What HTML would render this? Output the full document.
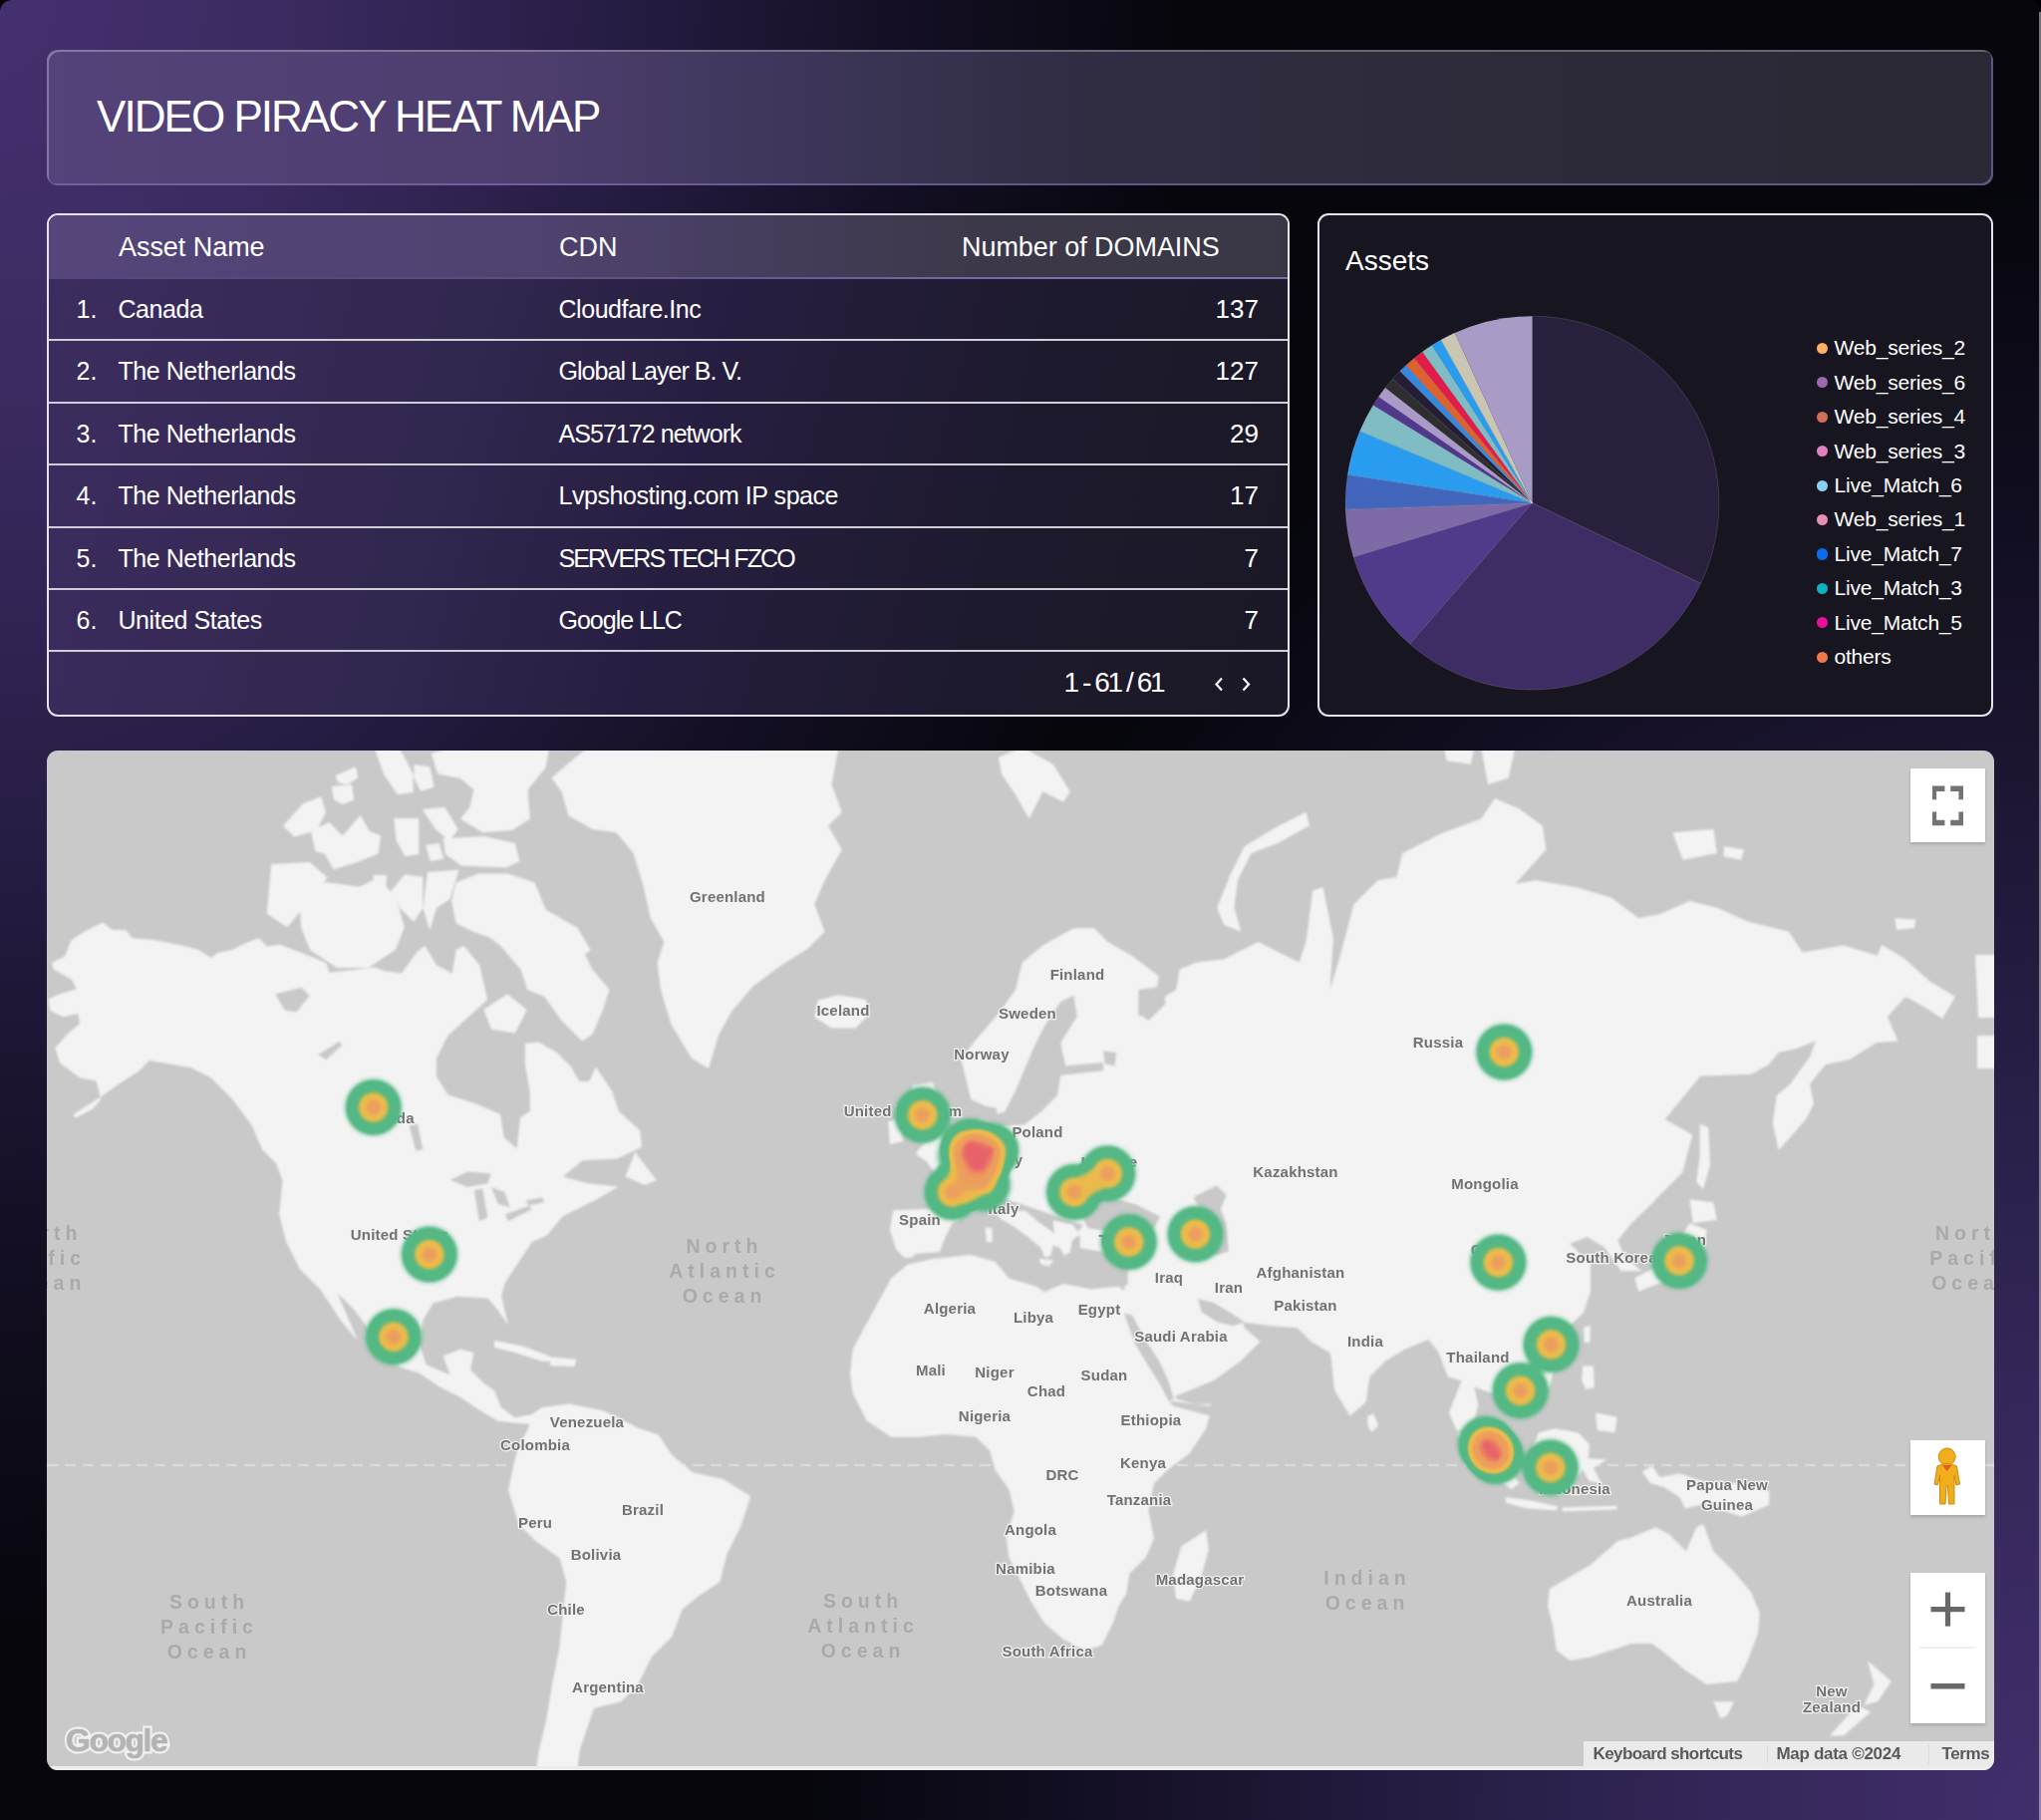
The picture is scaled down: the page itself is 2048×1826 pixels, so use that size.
<!DOCTYPE html>
<html><head><meta charset="utf-8">
<style>
*{margin:0;padding:0;box-sizing:border-box}
html,body{width:2048px;height:1826px;overflow:hidden;background:#000}
body{font-family:"Liberation Sans",sans-serif;color:#fff;position:relative}
#frame{position:absolute;left:0;top:0;width:2048px;height:1826px;border-radius:12px 12px 0 0;
 background:radial-gradient(ellipse 1200px 1650px at 0px 0px,#45306f 0%,#3a2a60 25%,#281d45 50%,#140f24 75%,rgba(6,6,12,0) 100%),radial-gradient(ellipse 1250px 1650px at 2048px 1826px,#412e6c 0%,#35275a 25%,#221a3c 55%,#120e22 78%,rgba(6,6,12,0) 100%),#06060c;overflow:hidden}
.abs{position:absolute}
#title{left:47px;top:50px;width:1953px;height:136px;border-radius:11px;
 background:linear-gradient(to right,#54427a 0%,#4d3e6e 25%,#3a3454 42%,#312d44 52%,#2e2c3c 68%,#2a2834 100%);
 box-shadow:inset 2px 2px 0 rgba(255,255,255,0.28), inset -2px -2px 0 rgba(140,120,190,0.55)}
#title h1{position:absolute;left:97px;top:88px;font-weight:normal;font-size:44px;line-height:56px;letter-spacing:-1.95px;white-space:nowrap}
#table{left:47px;top:214px;width:1247px;height:505px;border:2px solid #e4e2ea;border-radius:11px;overflow:hidden;
 background:linear-gradient(105deg,#3c2d60 0%,#32274f 33%,#261e40 52%,#1e1a2e 75%,#1a1826 100%)}
#thead{left:0;top:0;width:100%;height:64px;background:linear-gradient(to right,#55457b 0%,#4f426f 40%,#3d3849 75%,#393745 100%);border-bottom:2px solid transparent;border-image:linear-gradient(to right,rgba(125,108,174,0) 0%,rgba(125,108,174,0.3) 40%,#7d6cae 80%) 1}
.th{position:absolute;top:15.3px;font-size:27px;line-height:34px;white-space:nowrap;letter-spacing:-0.05px}
.row{position:absolute;left:0;width:100%;height:62.4px;border-bottom:2px solid #cfcdd6}
.row span{position:absolute;top:14px;font-size:25px;line-height:32px;white-space:nowrap;letter-spacing:-0.45px}
.row .n{left:27.5px;letter-spacing:0}
.row .a{left:69.5px}
.row .c{left:511.5px}
.row .d{right:29px;letter-spacing:0;font-size:26px}
#pager{left:1018.5px;top:451.5px;font-size:28px;line-height:34px;letter-spacing:-2.4px;white-space:nowrap}
#pie{left:1322px;top:214px;width:678px;height:505px;border:2px solid #e4e2ea;border-radius:11px;background:#17151f}
#pie .t{position:absolute;left:26px;top:28.5px;font-size:28px;line-height:34px}
.lg{position:absolute;left:516.5px;font-size:21px;line-height:26px;white-space:nowrap;letter-spacing:-0.2px}
.lg i{position:absolute;left:-17.5px;top:7.6px;width:11.2px;height:11.2px;border-radius:50%}
#map{left:47px;top:753px;width:1954px;height:1023px;border-radius:11px;overflow:hidden;background:#c9c9c9}
</style></head><body>
<div id="frame">
 <div style="position:absolute;right:0;top:12px;width:1.7px;height:1814px;background:linear-gradient(#74727e,#7e7a90 50%,#9088a8)"></div>
 <div id="title" class="abs"><h1 style="left:50px;top:39px">VIDEO PIRACY HEAT MAP</h1></div>

 <div id="table" class="abs">
  <div id="thead" class="abs">
   <div class="th" style="left:70px">Asset Name</div>
   <div class="th" style="left:512px">CDN</div>
   <div class="th" style="left:916px">Number of DOMAINS</div>
  </div>
  <div class="row" style="top:64px"><span class="n">1.</span><span class="a">Canada</span><span class="c">Cloudfare.Inc</span><span class="d">137</span></div>
  <div class="row" style="top:126.4px"><span class="n">2.</span><span class="a">The Netherlands</span><span class="c" style="letter-spacing:-0.95px">Global Layer B. V.</span><span class="d">127</span></div>
  <div class="row" style="top:188.8px"><span class="n">3.</span><span class="a">The Netherlands</span><span class="c" style="letter-spacing:-0.95px">AS57172 network</span><span class="d">29</span></div>
  <div class="row" style="top:251.2px"><span class="n">4.</span><span class="a">The Netherlands</span><span class="c">Lvpshosting.com IP space</span><span class="d">17</span></div>
  <div class="row" style="top:313.6px"><span class="n">5.</span><span class="a">The Netherlands</span><span class="c" style="letter-spacing:-1.9px">SERVERS TECH FZCO</span><span class="d">7</span></div>
  <div class="row" style="top:376px"><span class="n">6.</span><span class="a">United States</span><span class="c" style="letter-spacing:-1px">Google LLC</span><span class="d">7</span></div>
  <div id="pager" class="abs">1 - 61 / 61</div>
  <svg class="abs" style="left:1168px;top:461px" width="40" height="20"><path d="M9 3.5L3.5 9.5L9 15.5M30.5 3.5L36 9.5L30.5 15.5" fill="none" stroke="#fff" stroke-width="2.2"/></svg>
 </div>

 <div id="pie" class="abs">
  <div class="t">Assets</div>
  <div class="lg" style="top:120.3px"><i style="background:#fcb068"></i>Web_series_2</div>
  <div class="lg" style="top:154.7px"><i style="background:#a066b0"></i>Web_series_6</div>
  <div class="lg" style="top:189.1px"><i style="background:#d07058"></i>Web_series_4</div>
  <div class="lg" style="top:223.6px"><i style="background:#e080c0"></i>Web_series_3</div>
  <div class="lg" style="top:258.0px"><i style="background:#88d0f4"></i>Live_Match_6</div>
  <div class="lg" style="top:292.4px"><i style="background:#e890b0"></i>Web_series_1</div>
  <div class="lg" style="top:326.8px"><i style="background:#0a6cf0"></i>Live_Match_7</div>
  <div class="lg" style="top:361.3px"><i style="background:#10b0c4"></i>Live_Match_3</div>
  <div class="lg" style="top:395.7px"><i style="background:#e8109c"></i>Live_Match_5</div>
  <div class="lg" style="top:430.1px"><i style="background:#f07848"></i>others</div>
 </div>
 <svg class="abs" style="left:0;top:0" width="2048" height="760"><path d="M1537.5 504.6L1537.50 317.20A187.4 187.4 0 0 1 1706.64 585.28Z" fill="#29203e" stroke="#ffffff" stroke-opacity="0.18" stroke-width="0.7"/>
<path d="M1537.5 504.6L1706.64 585.28A187.4 187.4 0 0 1 1414.55 646.03Z" fill="#3e2c64" stroke="#ffffff" stroke-opacity="0.18" stroke-width="0.7"/>
<path d="M1537.5 504.6L1414.55 646.03A187.4 187.4 0 0 1 1358.10 558.76Z" fill="#503a8a" stroke="#ffffff" stroke-opacity="0.18" stroke-width="0.7"/>
<path d="M1537.5 504.6L1358.10 558.76A187.4 187.4 0 0 1 1350.21 511.14Z" fill="#7d6aa6" stroke="#ffffff" stroke-opacity="0.18" stroke-width="0.7"/>
<path d="M1537.5 504.6L1350.21 511.14A187.4 187.4 0 0 1 1352.26 476.25Z" fill="#4266bc" stroke="#ffffff" stroke-opacity="0.18" stroke-width="0.7"/>
<path d="M1537.5 504.6L1352.26 476.25A187.4 187.4 0 0 1 1364.49 432.58Z" fill="#2a9cf0" stroke="#ffffff" stroke-opacity="0.18" stroke-width="0.7"/>
<path d="M1537.5 504.6L1364.49 432.58A187.4 187.4 0 0 1 1377.89 406.41Z" fill="#80bcc4" stroke="#ffffff" stroke-opacity="0.18" stroke-width="0.7"/>
<path d="M1537.5 504.6L1377.89 406.41A187.4 187.4 0 0 1 1383.43 397.92Z" fill="#50398c" stroke="#ffffff" stroke-opacity="0.18" stroke-width="0.7"/>
<path d="M1537.5 504.6L1383.43 397.92A187.4 187.4 0 0 1 1390.03 388.97Z" fill="#a99ac8" stroke="#ffffff" stroke-opacity="0.18" stroke-width="0.7"/>
<path d="M1537.5 504.6L1390.03 388.97A187.4 187.4 0 0 1 1397.36 380.18Z" fill="#2e2e2e" stroke="#ffffff" stroke-opacity="0.18" stroke-width="0.7"/>
<path d="M1537.5 504.6L1397.36 380.18A187.4 187.4 0 0 1 1404.76 372.32Z" fill="#251d35" stroke="#ffffff" stroke-opacity="0.18" stroke-width="0.7"/>
<path d="M1537.5 504.6L1404.76 372.32A187.4 187.4 0 0 1 1410.89 366.43Z" fill="#3588dc" stroke="#ffffff" stroke-opacity="0.18" stroke-width="0.7"/>
<path d="M1537.5 504.6L1410.89 366.43A187.4 187.4 0 0 1 1419.06 359.38Z" fill="#dc6230" stroke="#ffffff" stroke-opacity="0.18" stroke-width="0.7"/>
<path d="M1537.5 504.6L1419.06 359.38A187.4 187.4 0 0 1 1427.35 352.99Z" fill="#e21c4a" stroke="#ffffff" stroke-opacity="0.18" stroke-width="0.7"/>
<path d="M1537.5 504.6L1427.35 352.99A187.4 187.4 0 0 1 1436.81 346.55Z" fill="#80bcc4" stroke="#ffffff" stroke-opacity="0.18" stroke-width="0.7"/>
<path d="M1537.5 504.6L1436.81 346.55A187.4 187.4 0 0 1 1445.93 341.09Z" fill="#2a9cf0" stroke="#ffffff" stroke-opacity="0.18" stroke-width="0.7"/>
<path d="M1537.5 504.6L1445.93 341.09A187.4 187.4 0 0 1 1459.79 334.07Z" fill="#cac6b4" stroke="#ffffff" stroke-opacity="0.18" stroke-width="0.7"/>
<path d="M1537.5 504.6L1459.79 334.07A187.4 187.4 0 0 1 1537.50 317.20Z" fill="#a89cc6"/></svg>

 <div id="map" class="abs"><svg width="1954" height="1023" viewBox="0 0 1954 1023" style="position:absolute;left:0;top:0"><defs><filter id="bl" x="0" y="0" width="1954" height="1023" filterUnits="userSpaceOnUse"><feGaussianBlur stdDeviation="1.2"/></filter></defs><line x1="0" y1="717" x2="1954" y2="717" stroke="#dadada" stroke-width="2.5" stroke-dasharray="11 7"/><g filter="url(#bl)"><g fill="#f3f3f3"><path d="M4.9 212.9L18.1 206.3L24.7 189.9L37.9 181.6L56.0 172.5L65.9 180.0L79.1 180.0L85.7 188.2L107.1 189.9L131.9 194.8L151.6 199.7L164.8 208.0L171.4 203.0L186.3 199.7L199.4 193.2L212.6 188.2L220.9 196.4L234.1 194.8L247.2 199.7L263.7 206.3L280.2 212.9L283.5 222.8L312.8 219.5L328.4 217.5L340.2 221.5L355.9 223.4L371.5 201.9L379.4 196.0L391.1 215.6L406.8 223.4L410.7 199.9L418.6 196.0L434.3 215.6L442.1 250.1L402.4 285.9L390.9 309.0L390.9 327.1L402.4 345.2L432.1 355.1L455.2 365.0L458.5 388.1L471.7 399.6L475.0 368.3L484.9 361.7L484.9 343.6L479.9 315.6L479.9 294.1L493.1 292.5L511.2 302.4L526.1 317.2L534.3 332.0L544.2 332.0L550.8 317.2L567.3 341.9L573.9 361.7L595.3 381.5L596.9 398.0L572.2 409.5L537.6 411.2L517.8 427.6L542.6 434.2L573.9 437.5L550.8 450.7L517.8 467.2L501.3 487.0L501.1 487.0L487.0 492.8L473.3 513.4L459.6 533.9L456.2 547.7L463.0 576.8L452.7 561.4L442.4 549.4L411.6 547.7L387.6 554.5L377.3 571.7L373.8 595.7L380.7 616.3L404.7 626.5L397.6 607.6L414.7 600.7L428.5 604.1L425.0 621.3L438.7 635.0L449.0 641.9L455.9 659.0L469.6 669.3L486.8 665.9L490.2 676.2L469.6 674.5L452.5 672.7L435.3 662.5L414.7 648.7L394.2 638.4L373.6 624.7L353.0 617.9L329.3 588.8L308.7 561.4L291.5 544.2L301.8 568.2L312.1 592.2L295.0 571.7L274.4 540.8L253.8 520.2L240.1 492.8L233.2 465.3L236.6 431.0L229.8 413.9L216.1 400.2L205.8 376.2L185.2 348.7L164.6 328.2L144.0 317.9L102.9 311.0L92.3 321.7L74.2 333.3L54.4 347.3L36.3 358.8L26.4 365.4L28.8 368.7L46.2 359.6L54.4 349.7L49.4 331.6L33.0 328.3L13.2 313.5L8.2 298.6L21.4 283.8L33.0 273.9L31.3 264.0L16.5 267.3L3.3 260.7L1.6 249.2L13.2 244.2L29.7 239.3L24.7 229.4L6.6 219.5Z"/><path d="M486.8 665.9L497.0 659.0L524.5 655.6L558.8 662.5L593.1 679.6L613.7 686.5L627.4 707.0L648.0 724.2L678.8 731.0L706.3 748.2L696.0 779.1L682.3 806.5L675.4 833.9L654.8 847.7L637.7 861.4L627.4 888.8L606.8 909.4L593.1 937.2L576.2 954.2L548.8 961.1L541.9 981.7L535.0 1002.3L531.6 1026.3L490.4 1026.3L493.9 1002.3L500.7 974.8L507.6 933.7L514.5 899.4L517.9 865.1L521.3 834.2L514.5 810.2L490.4 793.0L473.3 775.9L463.0 741.6L469.9 710.7L473.0 700.2L483.3 679.6Z"/><path d="M506.3 27.4L530.3 6.9L544.0 -3.4L794.4 -3.4L787.5 34.3L797.8 61.7L784.1 75.5L797.8 99.5L780.6 130.3L770.3 154.3L780.6 181.8L763.5 198.9L736.1 216.1L708.6 236.6L688.0 260.7L674.3 284.7L664.0 319.0L646.9 308.7L626.3 274.4L616.0 240.1L612.6 212.6L619.4 192.1L605.7 168.1L598.9 137.2L588.6 102.9L571.4 82.3L547.4 78.9L523.4 65.2L516.5 41.2Z"/><path d="M773.8 250.4L794.4 245.2L821.8 249.7L825.9 264.1L811.5 278.5L787.5 278.5L770.3 267.5Z"/><path d="M423.9 130.3L444.5 130.3L468.5 137.2L489.1 150.9L506.3 164.6L526.8 178.3L537.1 198.9L547.4 219.5L564.6 240.1L557.7 260.7L547.4 284.7L537.1 291.5L516.5 270.9L499.4 246.9L482.3 240.1L475.4 219.5L454.8 195.5L441.1 185.2L430.8 164.6L423.9 147.5Z"/><path d="M438.3 259.9L462.0 244.2L481.7 259.9L469.9 283.6L446.2 279.7Z"/><path d="M590.3 402.9L611.8 430.9L600.2 435.9L580.5 427.6Z"/><path d="M449.0 592.1L476.5 597.3L500.5 605.9L514.2 612.7L497.0 612.7L469.6 604.1L449.0 599.0Z"/><path d="M503.9 608.3L531.3 611.0L529.6 617.9L505.6 617.2Z"/><path d="M927.4 350.2L917.1 308.7L934.2 288.1L954.8 264.1L972.0 240.1L978.8 212.6L999.4 195.5L1030.3 178.3L1050.8 178.3L1064.6 192.1L1088.6 205.8L1116.0 226.4L1112.6 243.5L1095.4 253.8L1095.4 267.5L1116.0 250.4L1133.2 240.1L1136.6 219.5L1153.7 212.6L1181.2 209.2L1215.5 192.1L1236.1 202.4L1256.6 212.6L1263.5 192.1L1270.3 140.6L1280.6 137.2L1290.9 188.6L1287.5 240.1L1297.8 205.8L1311.5 154.3L1335.5 130.3L1354.4 126.9L1360.3 102.9L1401.5 82.3L1439.2 68.6L1452.9 48.0L1476.9 58.3L1500.9 75.5L1504.4 99.5L1473.5 133.8L1494.1 130.3L1535.2 137.2L1569.5 147.5L1597.0 168.1L1617.5 164.6L1648.4 150.9L1675.9 157.8L1706.7 171.5L1747.9 181.8L1761.6 202.4L1802.8 195.5L1837.1 205.8L1841.0 195.0L1863.0 208.0L1890.0 232.0L1915.0 247.0L1902.0 269.0L1882.0 256.0L1865.0 247.0L1847.0 267.0L1857.5 291.5L1836.0 293.0L1809.0 310.0L1785.0 315.0L1769.1 334.5L1773.0 354.2L1765.2 369.9L1737.7 401.3L1731.8 373.8L1735.7 346.3L1749.5 334.5L1769.1 307.0L1775.0 291.3L1755.4 299.2L1737.7 303.1L1727.9 314.9L1710.2 324.7L1659.1 326.7L1623.7 369.9L1651.2 385.6L1641.4 422.9L1611.9 452.4L1453.0 397.0L1153.0 367.0L1003.0 367.0L943.0 357.0Z"/><path d="M1612.7 452.6L1590.1 474.2L1576.4 491.3L1583.3 508.5L1600.4 522.2L1579.8 522.2L1562.7 498.2L1545.5 487.9L1528.4 494.8L1549.0 515.3L1549.0 542.8L1542.1 563.4L1528.4 577.1L1514.7 611.4L1507.8 638.8L1476.9 645.7L1452.9 645.7L1432.3 638.8L1436.3 656.8L1432.4 672.4L1426.5 684.2L1414.8 682.2L1406.9 664.6L1419.5 632.2L1405.8 628.3L1396.0 602.8L1386.2 591.0L1362.7 600.8L1343.1 612.6L1327.4 628.3L1323.5 653.7L1307.8 667.5L1292.1 642.0L1288.2 604.7L1268.6 593.0L1254.9 579.3L1229.4 577.3L1200.0 573.4L1201.9 579.3L1217.6 593.0L1198.0 612.6L1170.6 632.2L1127.5 649.8L1111.8 622.4L1096.1 593.0L1082.4 567.5L1078.5 561.6L1084.8 514.6L1083.9 506.8L1058.4 502.8L1036.8 498.9L1034.9 483.2L1044.7 467.6L1042.7 455.8L1073.0 347.0L1353.0 327.0L1603.0 397.0Z"/><path d="M934.9 336.0L944.8 345.9L959.6 362.4L954.6 365.7L951.3 375.6L931.6 378.9L918.4 383.8L908.5 395.3L892.0 400.3L872.2 405.2L882.1 411.8L892.0 425.0L888.7 451.4L895.3 459.6L849.2 461.3L845.9 481.1L852.4 500.8L860.7 509.1L880.5 507.4L895.3 504.1L901.9 487.6L908.5 474.5L921.7 466.2L934.9 461.3L948.0 459.6L967.8 444.8L1000.8 428.3L1033.8 395.3L1017.3 329.4L967.8 329.4Z"/><path d="M289.7 25.2L310.0 16.2L312.3 27.5L301.0 34.3L292.0 32.0Z"/><path d="M285.8 36.1L306.1 33.9L308.3 49.6L297.1 54.1L288.1 49.6Z"/><path d="M329.3 -0.7L351.9 -5.2L360.9 10.5L367.6 24.1L367.6 42.1L351.9 44.3L338.3 24.1Z"/><path d="M368.5 14.0L384.2 16.2L388.8 36.5L375.2 41.0L368.5 27.5Z"/><path d="M385.6 3.3L419.4 -7.9L505.1 -7.9L500.6 16.9L482.6 39.4L484.8 68.7L466.8 80.0L437.5 82.2L414.9 68.7L424.0 57.4L428.5 39.4L414.9 28.1L392.4 23.6Z"/><path d="M237.1 75.6L257.3 53.0L275.4 46.3L279.9 62.0L270.9 80.1L248.3 86.8Z"/><path d="M265.1 80.9L283.1 71.9L296.7 85.4L314.7 65.1L323.7 80.9L335.0 85.4L332.7 103.4L310.2 112.4L287.7 119.2L278.6 103.4L269.6 101.2Z"/><path d="M348.3 68.0L373.1 68.0L373.1 104.1L359.6 106.3L350.6 90.6Z"/><path d="M380.2 95.1L393.7 92.9L398.2 108.7L384.7 110.9Z"/><path d="M397.8 88.3L438.4 86.1L469.9 92.9L474.4 110.9L460.9 117.6L415.9 115.4L400.1 104.1Z"/><path d="M376.8 58.9L399.3 56.7L412.9 79.2L403.8 90.5L390.3 79.2Z"/><path d="M225.3 114.1L263.7 111.9L281.7 127.6L263.7 150.2L241.1 177.2L220.8 163.7Z"/><path d="M252.8 136.8L282.1 132.3L313.7 136.8L331.7 127.8L349.7 145.8L358.8 177.3L349.7 199.9L322.7 217.9L291.1 217.9L264.1 199.9L255.1 177.3Z"/><path d="M327.5 125.1L341.1 125.1L338.8 158.9L329.8 161.2Z"/><path d="M345.7 140.3L359.2 124.5L377.2 126.8L377.2 158.3L368.2 171.8L354.7 158.3Z"/><path d="M382.0 122.0L413.5 119.8L404.5 149.1L391.0 158.1L384.2 180.6L377.5 158.1Z"/><path d="M410.6 132.6L433.2 123.6L462.5 123.6L489.5 132.6L500.8 159.7L532.3 177.7L545.9 200.2L532.3 209.2L509.8 200.2L482.8 191.2L455.7 191.2L428.7 182.2L410.6 173.2L406.1 150.6Z"/><path d="M953.0 347.0L1203.0 347.0L1203.0 477.0L1043.0 477.0L953.0 447.0Z"/></g><g fill="#c9c9c9"><path d="M1017.3 251.9L1030.5 245.4L1033.8 266.8L1017.3 293.2L1022.2 316.2L1060.1 312.9L1060.1 321.2L1017.3 326.1L1014.0 345.9L997.5 362.4L981.0 375.6L954.6 377.2L948.0 365.7L961.2 362.4L972.8 339.3L990.9 296.4L1000.8 276.7Z"/><path d="M1042.7 455.8L1068.2 448.0L1093.7 455.8L1117.2 467.6L1111.3 479.3L1087.8 479.3L1068.2 483.2L1044.7 479.3L1038.8 467.6Z"/><path d="M1150.5 448.0L1174.0 436.2L1183.8 446.0L1177.9 459.7L1183.8 475.4L1185.8 502.8L1172.0 506.8L1162.3 489.1L1158.3 463.6Z"/><path d="M1154.9 549.9L1170.6 553.8L1190.2 565.5L1201.9 573.4L1190.2 577.3L1174.5 573.4L1158.8 563.6Z"/><path d="M1095.4 240.1L1119.4 236.6L1122.9 253.8L1105.7 270.9L1095.4 264.1Z"/><path d="M1060.1 301.4L1073.3 303.0L1071.7 316.2L1061.8 314.6Z"/><path d="M860.4 514.6L872.2 504.8L901.6 502.8L915.3 489.1L942.8 475.4L962.3 473.4L985.9 485.2L1009.4 506.8L1013.3 489.1L1029.0 479.3L1040.7 491.1L1068.2 502.8L1084.8 506.8L1084.8 536.1L1048.6 542.0L1009.4 545.9L950.6 522.4L891.8 514.6Z"/></g><g fill="#f3f3f3"><path d="M950.6 461.7L981.9 461.7L995.7 473.4L1009.4 483.2L1023.1 493.0L1019.2 498.9L1009.4 497.0L1007.4 506.8L1001.5 508.7L997.6 498.9L985.9 489.1L970.2 477.4L956.5 469.5Z"/><path d="M995.7 509.7L1010.4 511.6L1005.5 517.5L997.6 515.6Z"/><path d="M941.8 478.3L948.6 479.3L948.6 493.0L942.8 493.0Z"/><path d="M1009.4 471.5L1029.0 475.4L1036.8 485.2L1029.0 491.1L1027.0 502.8L1021.1 506.8L1015.3 497.0L1011.3 485.2Z"/><path d="M1036.8 483.2L1044.7 479.3L1068.2 483.2L1087.8 479.3L1111.3 479.3L1117.2 491.1L1084.8 506.8L1058.4 502.8L1036.8 498.9Z"/><path d="M847.2 529.4L863.7 515.7L888.4 510.2L926.8 506.1L951.6 512.9L965.3 529.4L992.8 537.7L1001.0 543.2L1020.3 534.9L1047.7 540.4L1075.2 537.7L1086.2 545.9L1094.4 562.4L1108.2 584.4L1119.2 611.8L1127.4 633.8L1132.9 650.3L1152.1 655.8L1170.0 655.8L1163.1 680.5L1146.6 705.2L1124.6 721.7L1110.9 735.5L1105.4 762.9L1110.9 790.4L1102.7 809.6L1086.2 826.1L1083.4 845.4L1075.2 859.1L1069.7 875.6L1058.7 897.5L1042.2 903.0L1020.3 892.1L1001.0 875.6L987.3 853.6L976.3 831.6L965.3 809.6L962.6 787.7L970.8 762.9L965.3 741.0L951.6 721.7L946.1 702.5L932.3 688.8L902.1 686.0L874.6 688.8L847.2 688.8L822.5 672.3L808.7 644.8L806.0 625.6L808.7 600.8L827.9 565.1Z"/><path d="M1138.4 798.6L1163.1 782.2L1165.9 801.4L1157.6 831.6L1146.6 853.6L1132.9 850.8L1130.1 826.1Z"/><path d="M868.9 336.0L888.7 332.7L895.3 349.2L903.5 382.2L901.9 405.2L882.1 411.8L872.2 403.6L882.1 392.0L868.9 375.6L865.6 352.5Z"/><path d="M844.2 372.3L857.4 369.0L859.0 392.0L845.9 395.3Z"/><path d="M1648.4 474.2L1665.6 481.0L1662.1 508.5L1638.1 529.1L1614.1 535.9L1597.0 542.8L1593.5 529.1L1614.1 518.8L1631.3 501.6Z"/><path d="M1648.4 450.2L1672.4 453.6L1675.9 470.8L1651.8 474.2Z"/><path d="M1658.7 374.7L1667.3 378.2L1669.0 415.9L1662.1 439.9L1655.3 433.0L1658.7 405.6Z"/><path d="M1542.1 578.8L1549.0 577.1L1548.3 594.2L1542.8 593.5Z"/><path d="M1541.2 617.6L1551.9 617.6L1552.9 639.1L1544.1 641.1L1540.2 631.3Z"/><path d="M1553.9 664.6L1575.5 668.5L1573.5 684.2L1555.9 682.2Z"/><path d="M1497.1 684.2L1512.8 680.3L1536.3 684.2L1548.0 695.9L1546.1 715.5L1530.4 735.1L1512.8 739.1L1495.1 723.4L1489.2 703.8Z"/><path d="M1414.8 684.2L1434.4 688.1L1461.8 715.5L1477.5 735.1L1469.6 741.0L1450.0 727.3L1426.5 703.8Z"/><path d="M1463.8 748.9L1491.2 752.8L1516.7 758.7L1514.7 762.6L1485.3 760.6L1463.8 754.7Z"/><path d="M1540.2 709.7L1565.7 711.6L1551.9 719.5L1559.8 735.1L1548.0 733.2L1542.1 723.4Z"/><path d="M1520.6 759.6L1575.5 757.7L1575.5 761.6L1520.6 763.6Z"/><path d="M1600.9 723.4L1610.7 717.5L1618.6 729.3L1638.2 725.3L1667.6 735.1L1697.0 735.1L1728.3 743.0L1728.3 756.7L1700.9 768.5L1687.2 764.5L1667.6 754.7L1644.1 760.6L1638.2 748.9L1622.5 739.1L1608.8 735.1Z"/><path d="M1507.8 841.1L1549.0 817.0L1576.4 793.0L1590.1 789.6L1614.1 779.3L1627.8 786.2L1645.0 803.3L1655.3 779.3L1662.1 775.9L1672.4 803.3L1693.0 823.9L1710.2 844.5L1718.7 865.1L1717.0 885.6L1706.7 913.1L1696.4 933.7L1665.6 937.1L1645.0 923.4L1624.4 906.2L1610.7 895.9L1590.1 895.9L1569.5 902.8L1549.0 909.6L1528.4 913.1L1514.7 902.8L1511.2 878.8L1506.1 858.2Z"/><path d="M1672.4 954.2L1693.0 954.2L1686.1 968.0L1679.3 971.4Z"/><path d="M1826.8 913.1L1850.8 933.7L1837.1 954.2L1823.3 957.7L1833.6 937.1Z"/><path d="M1816.5 957.7L1830.2 964.5L1802.8 988.5L1789.0 988.5Z"/><path d="M1263.5 61.7L1266.9 75.5L1236.1 92.6L1208.6 102.9L1194.9 130.3L1191.5 157.8L1198.3 181.8L1181.2 174.9L1174.3 157.8L1188.0 123.5L1201.8 96.0L1236.1 75.5Z"/><path d="M954.8 6.9L978.8 -3.4L1009.7 13.7L1026.8 41.2L1020.0 51.4L999.4 41.2L985.7 68.6L972.0 44.6L958.2 24.0Z"/><path d="M1439.2 -3.4L1473.5 -3.4L1466.6 27.4L1446.1 34.3Z"/><path d="M1401.5 -3.4L1432.3 -3.4L1428.9 13.7L1404.9 10.3Z"/><path d="M1631.3 82.3L1672.4 78.9L1675.9 102.9L1641.6 109.8Z"/><path d="M1682.7 96.0L1703.3 99.5L1699.9 109.8L1682.7 106.3Z"/><path d="M1854.2 168.1L1874.8 169.8L1873.1 178.3L1855.9 176.6Z"/><path d="M1935.0 205.0L1958.0 205.0L1958.0 268.0L1938.0 268.0Z"/><path d="M1937.0 286.0L1958.0 286.0L1958.0 319.0L1937.0 319.0Z"/><path d="M1855.0 171.0L1875.0 169.0L1874.0 178.0L1856.0 180.0Z"/><path d="M1325.4 667.5L1331.3 665.5L1336.2 677.3L1329.3 684.1L1325.4 677.3Z"/></g><g fill="#c9c9c9"><path d="M1080.8 564.5L1092.2 596.1L1104.5 616.3L1116.8 635.7L1125.6 652.4L1130.9 650.6L1125.6 633.0L1116.0 611.9L1104.5 594.4L1088.7 566.2Z"/><path d="M1125.6 652.4L1139.7 654.1L1166.1 657.7L1203.0 631.3L1203.0 677.0L1130.0 657.7Z"/><path d="M404.7 431.0L421.9 422.5L445.9 424.2L442.4 434.5L421.9 437.9Z"/><path d="M428.7 441.3L437.3 439.6L442.4 468.8L433.9 472.2Z"/><path d="M445.9 437.9L459.6 443.1L464.7 458.5L452.7 455.1Z"/><path d="M459.6 465.3L483.6 456.8L487.0 460.2L463.0 472.2Z"/><path d="M480.2 451.6L497.3 448.2L499.0 453.3L483.6 456.8Z"/><path d="M363.5 376.2L372.1 374.5L377.3 400.2L370.4 401.9Z"/><path d="M229.1 244.2L255.5 237.7L263.7 245.9L250.5 262.4L239.0 260.7Z"/><path d="M272.0 305.2L293.4 292.0L296.7 295.3L280.2 310.2Z"/></g></g></svg><svg width="1954" height="1023" style="position:absolute;left:0;top:0" font-family="Liberation Sans, sans-serif"><defs><filter id="tb" x="-5%" y="-20%" width="110%" height="140%"><feGaussianBlur stdDeviation="0.75"/></filter></defs><g filter="url(#tb)" font-size="15" font-weight="bold" fill="#727272" text-anchor="middle" stroke="#f2f2f2" stroke-width="2.5" paint-order="stroke" letter-spacing="0.2"><text x="683.0" y="152.0">Greenland</text><text x="799.0" y="266.0">Iceland</text><text x="1034.0" y="230.0">Finland</text><text x="984.0" y="269.0">Sweden</text><text x="938.0" y="310.0">Norway</text><text x="1396.0" y="298.0">Russia</text><text x="994.0" y="388.0">Poland</text><text x="946.0" y="416.0">Germany</text><text x="859.0" y="367.0">United Kingdom</text><text x="908.0" y="445.0">France</text><text x="1066.0" y="418.0">Ukraine</text><text x="1253.0" y="428.0">Kazakhstan</text><text x="1443.0" y="440.0">Mongolia</text><text x="876.0" y="476.0">Spain</text><text x="960.0" y="465.0">Italy</text><text x="1083.0" y="496.0">Türkiye</text><text x="341.0" y="374.0">Canada</text><text x="354.0" y="491.0">United States</text><text x="348.0" y="590.0">Mexico</text><text x="1450.0" y="506.0">China</text><text x="1643.0" y="496.0">Japan</text><text x="1570.0" y="514.0">South Korea</text><text x="1126.0" y="534.0">Iraq</text><text x="1186.0" y="544.0">Iran</text><text x="1258.0" y="529.0">Afghanistan</text><text x="1263.0" y="562.0">Pakistan</text><text x="906.0" y="565.0">Algeria</text><text x="990.0" y="574.0">Libya</text><text x="1056.0" y="566.0">Egypt</text><text x="1138.0" y="593.0">Saudi Arabia</text><text x="1323.0" y="598.0">India</text><text x="1436.0" y="614.0">Thailand</text><text x="887.0" y="627.0">Mali</text><text x="951.0" y="629.0">Niger</text><text x="1003.0" y="648.0">Chad</text><text x="1061.0" y="632.0">Sudan</text><text x="941.0" y="673.0">Nigeria</text><text x="1108.0" y="677.0">Ethiopia</text><text x="542.0" y="679.0">Venezuela</text><text x="490.0" y="702.0">Colombia</text><text x="1019.0" y="732.0">DRC</text><text x="1100.0" y="720.0">Kenya</text><text x="1096.0" y="757.0">Tanzania</text><text x="490.0" y="780.0">Peru</text><text x="598.0" y="767.0">Brazil</text><text x="1533.0" y="746.0">Indonesia</text><text x="1686.0" y="742.0">Papua New</text><text x="1686.0" y="762.0">Guinea</text><text x="551.0" y="812.0">Bolivia</text><text x="987.0" y="787.0">Angola</text><text x="982.0" y="826.0">Namibia</text><text x="1028.0" y="848.0">Botswana</text><text x="1157.0" y="837.0">Madagascar</text><text x="521.0" y="867.0">Chile</text><text x="1618.0" y="858.0">Australia</text><text x="1004.0" y="909.0">South Africa</text><text x="563.0" y="945.0">Argentina</text><text x="1791.0" y="949.0">New</text><text x="1791.0" y="965.0">Zealand</text></g><g filter="url(#tb)" font-size="19.5" font-weight="bold" fill="#aaaaaa" text-anchor="middle" letter-spacing="5"><text x="680.0" y="504.0">North</text><text x="680.0" y="529.0">Atlantic</text><text x="680.0" y="554.0">Ocean</text><text x="819.0" y="860.0">South</text><text x="819.0" y="885.0">Atlantic</text><text x="819.0" y="910.0">Ocean</text><text x="163.0" y="861.0">South</text><text x="163.0" y="886.0">Pacific</text><text x="163.0" y="911.0">Ocean</text><text x="1325.0" y="837.0">Indian</text><text x="1325.0" y="862.0">Ocean</text><text x="15.0" y="491.0">rth</text><text x="15.0" y="516.0">ific</text><text x="15.0" y="541.0">ean</text><text x="1925.0" y="491.0">Nort</text><text x="1925.0" y="516.0">Pacif</text><text x="1925.0" y="541.0">Ocea</text></g></svg><svg width="1954" height="1023" style="position:absolute;left:0;top:0"><defs><radialGradient id="hg"><stop offset="0" stop-color="#fff" stop-opacity="0.80"/><stop offset="0.55" stop-color="#fff" stop-opacity="0.38"/><stop offset="1" stop-color="#fff" stop-opacity="0"/></radialGradient><filter id="heat" x="0" y="0" width="1954" height="1023" filterUnits="userSpaceOnUse" color-interpolation-filters="sRGB"><feGaussianBlur stdDeviation="1.5"/><feColorMatrix type="matrix" values="0 0 0 1 0 0 0 0 1 0 0 0 0 1 0 0 0 0 1 0"/><feComponentTransfer><feFuncR type="table" tableValues="0.333 0.333 0.333 0.333 0.333 0.333 0.333 0.333 0.412 0.706 0.918 0.925 0.929 0.933 0.933 0.933 0.933 0.925 0.910 0.910 0.910"/><feFuncG type="table" tableValues="0.722 0.722 0.722 0.722 0.722 0.722 0.722 0.722 0.725 0.737 0.733 0.733 0.706 0.647 0.627 0.620 0.588 0.490 0.392 0.376 0.376"/><feFuncB type="table" tableValues="0.525 0.525 0.525 0.525 0.525 0.525 0.525 0.525 0.478 0.353 0.306 0.298 0.314 0.353 0.369 0.369 0.369 0.392 0.416 0.416 0.416"/><feFuncA type="table" tableValues="0.000 0.300 0.750 1.000 1.000 1.000 1.000 1.000 1.000 1.000 1.000 1.000 1.000 1.000 1.000 1.000 1.000 1.000 1.000 1.000 1.000"/></feComponentTransfer></filter></defs><g filter="url(#heat)"><circle cx="327.7" cy="358.0" r="31" fill="url(#hg)" opacity="1.00"/><circle cx="383.9" cy="505.6" r="31" fill="url(#hg)" opacity="1.00"/><circle cx="347.9" cy="588.2" r="31" fill="url(#hg)" opacity="1.00"/><circle cx="878.7" cy="365.7" r="31" fill="url(#hg)" opacity="1.00"/><circle cx="926.2" cy="397.3" r="31" fill="url(#hg)" opacity="1.00"/><circle cx="947.3" cy="401.7" r="31" fill="url(#hg)" opacity="1.00"/><circle cx="933.2" cy="414.9" r="31" fill="url(#hg)" opacity="1.00"/><circle cx="939.4" cy="435.1" r="31" fill="url(#hg)" opacity="0.80"/><circle cx="908.6" cy="443.0" r="31" fill="url(#hg)" opacity="1.00"/><circle cx="921.0" cy="407.0" r="31" fill="url(#hg)" opacity="0.60"/><circle cx="1030.9" cy="443.0" r="31" fill="url(#hg)" opacity="1.00"/><circle cx="1064.3" cy="424.4" r="31" fill="url(#hg)" opacity="1.00"/><circle cx="1085.8" cy="493.0" r="31" fill="url(#hg)" opacity="1.00"/><circle cx="1152.5" cy="485.2" r="31" fill="url(#hg)" opacity="1.00"/><circle cx="1462.3" cy="302.5" r="31" fill="url(#hg)" opacity="1.00"/><circle cx="1456.4" cy="513.6" r="31" fill="url(#hg)" opacity="1.00"/><circle cx="1638.1" cy="511.9" r="31" fill="url(#hg)" opacity="1.00"/><circle cx="1509.5" cy="595.9" r="31" fill="url(#hg)" opacity="1.00"/><circle cx="1478.6" cy="642.2" r="31" fill="url(#hg)" opacity="1.00"/><circle cx="1444.0" cy="696.0" r="31" fill="url(#hg)" opacity="1.00"/><circle cx="1454.0" cy="708.0" r="31" fill="url(#hg)" opacity="1.00"/><circle cx="1449.0" cy="702.0" r="31" fill="url(#hg)" opacity="0.50"/><circle cx="1508.8" cy="719.5" r="31" fill="url(#hg)" opacity="1.00"/></g></svg><div style="position:absolute;left:0;top:1019px;width:1954px;height:4px;background:#ececec"></div>
<div style="position:absolute;left:1870px;top:17.5px;width:75px;height:74px;background:#fff;box-shadow:0 2px 3px rgba(0,0,0,0.18)">
 <svg width="75" height="74" style="position:absolute;left:0;top:0"><g fill="none" stroke="#737373" stroke-width="5.5" filter="url(#tb)">
 <path d="M23.4 31.3V20.3H34.4M40.2 20.3H51.2V31.3M51.2 43.6V54.6H40.2M34.4 54.6H23.4V43.6"/></g></svg></div>
<div style="position:absolute;left:1870px;top:691.5px;width:75px;height:75px;background:#fff;box-shadow:0 2px 3px rgba(0,0,0,0.18)">
 <svg width="75" height="75" style="position:absolute;left:0;top:0" filter="url(#tb)">
 <circle cx="36.7" cy="16.5" r="8.5" fill="#f2ad1c" stroke="#c98a10" stroke-width="1"/>
 <path d="M27 26Q36.7 21 46.5 26L49.5 44L46 45L44 35L44 64L38.5 64L37.5 46L36 46L35 64L29.5 64L29.5 35L27.5 45L24 44Z" fill="#f2ad1c" stroke="#c98a10" stroke-width="1"/>
 <path d="M32 25L36.7 31L41.5 25Z" fill="#e0602a"/></svg></div>
<div style="position:absolute;left:1870px;top:825px;width:75px;height:151px;background:#fff;box-shadow:0 2px 3px rgba(0,0,0,0.18)">
 <svg width="75" height="151" style="position:absolute;left:0;top:0"><g filter="url(#tb)" fill="#676767">
 <rect x="20.5" y="34" width="34" height="5.2"/><rect x="34.9" y="19.6" width="5.2" height="34"/>
 <rect x="9" y="74.5" width="57" height="1.2" fill="#e6e6e6"/>
 <rect x="20.5" y="111" width="34" height="5.5"/></g></svg></div>
<div style="position:absolute;left:1541.5px;top:993.5px;width:413px;height:25.5px;background:rgba(240,240,240,0.85);font-size:17px;line-height:25px;color:#5a5a5a;font-weight:bold;white-space:nowrap;filter:blur(0.6px)">
 <span style="position:absolute;left:10px;letter-spacing:-0.6px">Keyboard shortcuts</span>
 <span style="position:absolute;left:184.5px;top:3px;width:1px;height:20px;background:#dcdcdc"></span>
 <span style="position:absolute;left:194px;letter-spacing:-0.3px">Map data ©2024</span>
 <span style="position:absolute;left:346.5px;top:3px;width:1px;height:20px;background:#dcdcdc"></span>
 <span style="position:absolute;left:360px;letter-spacing:-0.4px">Terms</span>
</div>
<div style="position:absolute;left:19px;top:973px;font-size:32px;font-weight:bold;line-height:40px;color:#b4b4b4;letter-spacing:-1.5px;-webkit-text-stroke:5px #f2f2f2;paint-order:stroke fill;text-shadow:0 0 1.5px #9a9a9a;filter:blur(0.6px)">Google</div>
</div>
</div>
</body></html>
